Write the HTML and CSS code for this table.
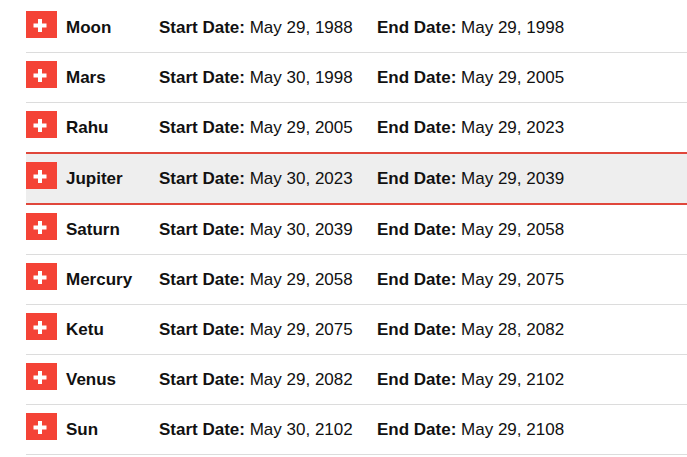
FILE: index.html
```html
<!DOCTYPE html>
<html>
<head>
<meta charset="utf-8">
<link rel="stylesheet" href="styles.css">
</head>
<body>
<ul class="dasha-list">
  <li class="row"><span class="icon"><svg width="31" height="27" viewBox="0 0 31 27"><rect width="31" height="27" fill="#f44336"/><path d="M12 8h4v4.5h4.5v4h-4.5v4.5h-4v-4.5H7.5v-4H12z" fill="#fff"/></svg></span><span class="name">Moon</span><span class="date"><b>Start Date:</b> May 29, 1988</span><span class="date"><b>End Date:</b> May 29, 1998</span></li>
  <li class="row"><span class="icon"><svg width="31" height="27" viewBox="0 0 31 27"><rect width="31" height="27" fill="#f44336"/><path d="M12 8h4v4.5h4.5v4h-4.5v4.5h-4v-4.5H7.5v-4H12z" fill="#fff"/></svg></span><span class="name">Mars</span><span class="date"><b>Start Date:</b> May 30, 1998</span><span class="date"><b>End Date:</b> May 29, 2005</span></li>
  <li class="row"><span class="icon"><svg width="31" height="27" viewBox="0 0 31 27"><rect width="31" height="27" fill="#f44336"/><path d="M12 8h4v4.5h4.5v4h-4.5v4.5h-4v-4.5H7.5v-4H12z" fill="#fff"/></svg></span><span class="name">Rahu</span><span class="date"><b>Start Date:</b> May 29, 2005</span><span class="date"><b>End Date:</b> May 29, 2023</span></li>
  <li class="row current"><span class="icon"><svg width="31" height="27" viewBox="0 0 31 27"><rect width="31" height="27" fill="#f44336"/><path d="M12 8h4v4.5h4.5v4h-4.5v4.5h-4v-4.5H7.5v-4H12z" fill="#fff"/></svg></span><span class="name">Jupiter</span><span class="date"><b>Start Date:</b> May 30, 2023</span><span class="date"><b>End Date:</b> May 29, 2039</span></li>
  <li class="row"><span class="icon"><svg width="31" height="27" viewBox="0 0 31 27"><rect width="31" height="27" fill="#f44336"/><path d="M12 8h4v4.5h4.5v4h-4.5v4.5h-4v-4.5H7.5v-4H12z" fill="#fff"/></svg></span><span class="name">Saturn</span><span class="date"><b>Start Date:</b> May 30, 2039</span><span class="date"><b>End Date:</b> May 29, 2058</span></li>
  <li class="row"><span class="icon"><svg width="31" height="27" viewBox="0 0 31 27"><rect width="31" height="27" fill="#f44336"/><path d="M12 8h4v4.5h4.5v4h-4.5v4.5h-4v-4.5H7.5v-4H12z" fill="#fff"/></svg></span><span class="name">Mercury</span><span class="date"><b>Start Date:</b> May 29, 2058</span><span class="date"><b>End Date:</b> May 29, 2075</span></li>
  <li class="row"><span class="icon"><svg width="31" height="27" viewBox="0 0 31 27"><rect width="31" height="27" fill="#f44336"/><path d="M12 8h4v4.5h4.5v4h-4.5v4.5h-4v-4.5H7.5v-4H12z" fill="#fff"/></svg></span><span class="name">Ketu</span><span class="date"><b>Start Date:</b> May 29, 2075</span><span class="date"><b>End Date:</b> May 28, 2082</span></li>
  <li class="row"><span class="icon"><svg width="31" height="27" viewBox="0 0 31 27"><rect width="31" height="27" fill="#f44336"/><path d="M12 8h4v4.5h4.5v4h-4.5v4.5h-4v-4.5H7.5v-4H12z" fill="#fff"/></svg></span><span class="name">Venus</span><span class="date"><b>Start Date:</b> May 29, 2082</span><span class="date"><b>End Date:</b> May 29, 2102</span></li>
  <li class="row"><span class="icon"><svg width="31" height="27" viewBox="0 0 31 27"><rect width="31" height="27" fill="#f44336"/><path d="M12 8h4v4.5h4.5v4h-4.5v4.5h-4v-4.5H7.5v-4H12z" fill="#fff"/></svg></span><span class="name">Sun</span><span class="date"><b>Start Date:</b> May 30, 2102</span><span class="date"><b>End Date:</b> May 29, 2108</span></li>
</ul>
</body>
</html>
```
FILE: styles.css
```css
html, body {
  margin: 0;
  padding: 0;
  background: #fff;
}
body {
  font-family: "Liberation Sans", Arial, sans-serif;
  font-size: 17px;
  color: #111;
}
.dasha-list {
  list-style: none;
  margin: 0;
  padding: 3px 0 0 26px;
}
.row {
  display: grid;
  grid-template-columns: 40px 93px 218px 1fr;
  align-items: center;
  height: 49px;
  border-bottom: 1px solid #dcdcdc;
}
.icon {
  display: block;
  width: 31px;
  height: 27px;
  margin-bottom: 6px;
}
.icon svg {
  display: block;
}
.name {
  font-weight: bold;
}
.date b {
  font-weight: bold;
}
.current {
  background: #eeeeee;
  border-top: 2px solid #e0473b;
  border-bottom: 2px solid #e0473b;
  margin-top: -1px;
  height: 49px;
}
```
